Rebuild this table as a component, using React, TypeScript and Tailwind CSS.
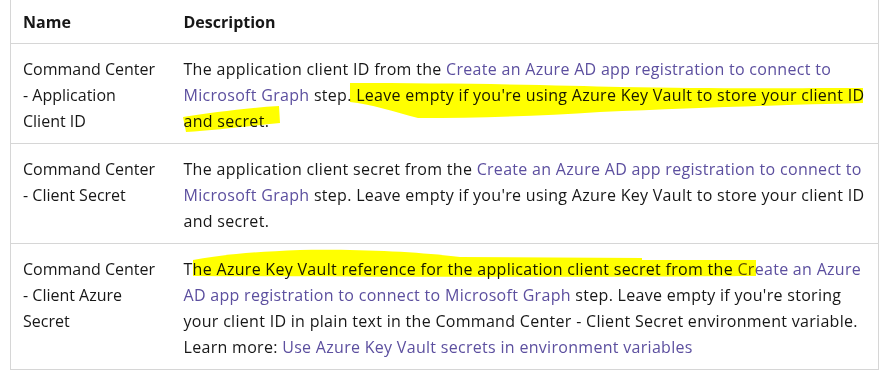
const link = "text-[#5c4f9f]";

function Highlights() {
  return (
    <svg
      className="pointer-events-none absolute left-0 top-0 mix-blend-multiply"
      width="896"
      height="382"
      viewBox="0 0 896 382"
    >
      <path
        d="M350 83 C 450 83, 560 85, 620 87 C 720 89, 800 88, 863 88 L 863 103 C 780 105, 700 108, 600 112 C 540 116, 480 118, 418 118 C 395 112, 370 104, 350 102 Z"
        fill="#ffff00"
      />
      <path
        d="M183 117 C 210 113, 245 108, 279 106 L 280 123 C 250 126, 215 130, 186 132 Z"
        fill="#ffff00"
      />
      <path
        d="M193 260 C 220 255, 250 252, 300 250 C 360 249, 420 252, 460 257 L 642 258 L 642 260 L 756 260 L 756 276 C 620 277, 420 277, 193 276 Z"
        fill="#ffff00"
      />
    </svg>
  );
}

export default function App() {
  return (
    <div className="relative h-[382px] w-[896px] bg-white font-['Segoe_UI','Open_Sans',sans-serif] text-[16px] leading-[26px] tracking-[0.3px] text-[#171717]">
      <table className="ml-[10px] w-[869px] table-fixed border-collapse">
        <colgroup>
          <col className="w-[161px]" />
          <col />
        </colgroup>
        <thead>
          <tr className="h-[43px] border-x border-b border-[#d6d6d6]">
            <th className="px-3 pt-px text-left font-bold tracking-normal">Name</th>
            <th className="px-3 pt-px text-left font-bold tracking-normal">Description</th>
          </tr>
        </thead>
        <tbody>
          <tr className="border border-[#d6d6d6] align-top">
            <td className="px-3 pb-[9px] pt-3 tracking-normal">
              Command Center - Application Client ID
            </td>
            <td className="px-3 pb-[9px] pt-3">
              The application client ID from the{" "}
              <a className={link}>
                Create an Azure AD app registration to connect to Microsoft Graph
              </a>{" "}
              step. Leave empty if you're using Azure Key Vault to store your
              client ID and secret.
            </td>
          </tr>
          <tr className="border border-[#d6d6d6] align-top">
            <td className="px-3 pb-[9px] pt-3 tracking-normal">
              Command Center - Client Secret
            </td>
            <td className="px-3 pb-[9px] pt-3">
              The application client secret from the{" "}
              <a className={link}>
                Create an Azure AD app registration to connect to Microsoft Graph
              </a>{" "}
              step. Leave empty if you're using Azure Key Vault to store your
              client ID and secret.
            </td>
          </tr>
          <tr className="border border-[#d6d6d6] align-top">
            <td className="px-3 pb-[9px] pt-3 tracking-normal">
              Command Center - Client Azure Secret
            </td>
            <td className="px-3 pb-[9px] pt-3">
              The Azure Key Vault reference for the application client secret
              from the{" "}
              <a className={link}>
                Create an Azure AD app registration to connect to Microsoft Graph
              </a>{" "}
              step. Leave empty if you're storing your client ID in plain text in
              the Command Center - Client Secret environment variable. Learn
              more:{" "}
              <a className={link}>Use Azure Key Vault secrets in environment variables</a>
            </td>
          </tr>
        </tbody>
      </table>
      <Highlights />
    </div>
  );
}
